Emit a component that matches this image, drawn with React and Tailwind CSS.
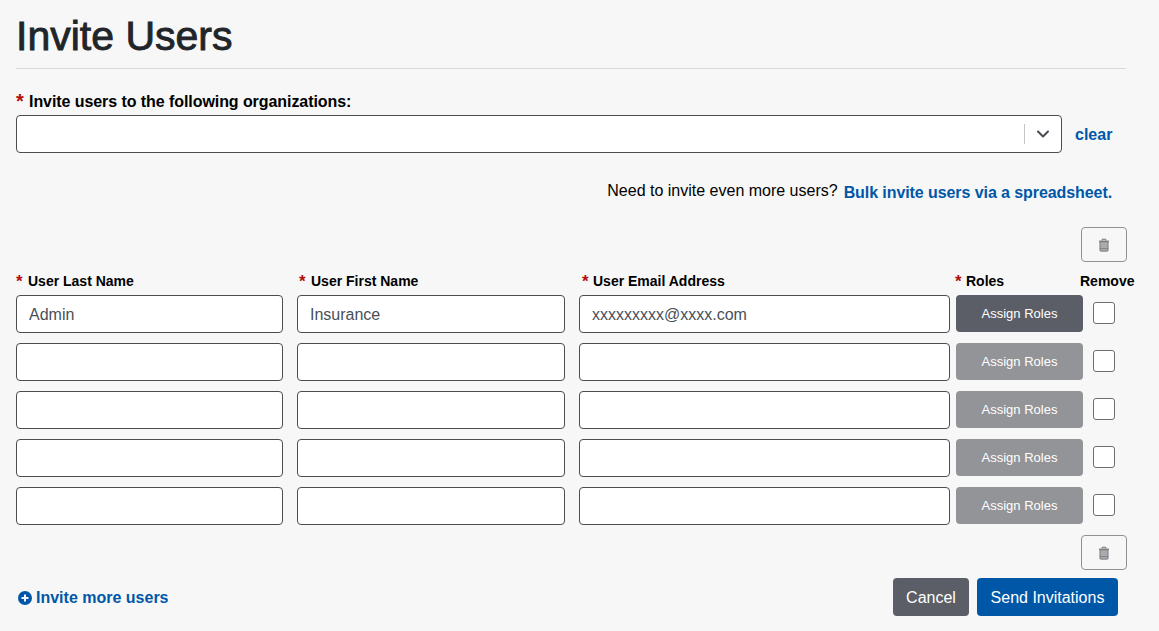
import React from "react";
import { ChevronDown } from "lucide-react";

function Star({ big = false, narrow = false }) {
  return (
    <span className={`inline-block text-[#b00d0d] font-bold leading-none [vertical-align:-1px] ${big ? "w-[13px] text-[20px] h-[12px]" : narrow ? "w-[11px] text-[17px] h-[10px]" : "w-[12px] text-[17px] h-[10px]"}`}>*</span>
  );
}

function Trash() {
  return (
    <svg width="12" height="14" viewBox="0 0 12 14" aria-hidden="true">
      <path d="M1 2.6h10v1.2H1z" fill="#6f7175" />
      <path d="M4.2 2.6V1.2h3.6v1.4" fill="none" stroke="#6f7175" strokeWidth="1" />
      <path d="M1.9 3.8h8.2v8.4c0 .6-.4 1-1 1H2.9c-.6 0-1-.4-1-1z" fill="#a9abad" stroke="#6f7175" strokeWidth=".8" />
      <path d="M2 10.6h8" stroke="#6f7175" strokeWidth=".7" />
    </svg>
  );
}

function TrashButton() {
  return (
    <div className="flex justify-end pr-[32px]">
      <button className="w-[46px] h-[35px] border border-[#8f9194] rounded flex items-center justify-center bg-[#f7f7f7]">
        <Trash />
      </button>
    </div>
  );
}

function Field({ value, w }) {
  return (
    <input
      readOnly
      value={value}
      className={`${w} h-[38px] bg-white border border-[#4a4d52] rounded pl-3 pt-[2px] text-base text-[#495057] outline-none`}
    />
  );
}

function Row({ last = "", first = "", email = "", active = false }) {
  return (
    <div className="flex items-center h-[38px]">
      <Field value={last} w="w-[267px]" />
      <div className="w-[14px]" />
      <Field value={first} w="w-[268px]" />
      <div className="w-[14px]" />
      <Field value={email} w="w-[371px]" />
      <button
        className={`ml-[6px] w-[127px] h-[37px] self-start rounded text-[13px] text-white ${
          active ? "bg-[#5b5e66]" : "bg-[#939497]"
        }`}
      >
        Assign Roles
      </button>
      <div className="ml-[10px] mb-[2px] w-[22px] h-[22px] bg-white border border-[#6b6d70] rounded-[3px]" />
    </div>
  );
}

export default function App() {
  return (
    <div className="w-[1159px] h-[631px] overflow-hidden bg-[#f7f7f7] pl-4 font-['Liberation_Sans',Arial,sans-serif] text-black">
      <h1 className="w-[1110px] h-[69px] border-b border-[#d5dbdb] text-[41px] leading-[73px] [-webkit-text-stroke:0.9px_#212529] text-[#212529]">
        Invite Users
      </h1>

      <div className="mt-[22px] h-[22px] text-base leading-[22px] font-bold tracking-[-0.07px]">
        <Star big />
        Invite users to the following organizations:
      </div>
      <div className="flex items-center mt-[2px]">
        <div className="w-[1046px] h-[38px] bg-white border border-[#4a4d52] rounded flex items-center justify-end">
          <div className="w-px h-[20px] bg-[#c4c4c4]" />
          <ChevronDown size={20} strokeWidth={2.5} className="text-[#4a4d52] ml-[8px] mr-[8px]" />
        </div>
        <a className="ml-[13px] pt-[2px] text-base font-bold text-[#0057a8]">clear</a>
      </div>

      <div className="w-[1096px] mt-[27px] h-[22px] flex justify-end items-start text-base leading-[22px]">
        <span>Need to invite even more users?</span>
        <a className="ml-[6px] mt-[2px] font-bold tracking-[-0.08px] text-[#0057a8]">Bulk invite users via a spreadsheet.</a>
      </div>

      <div className="mt-[25px]">
        <TrashButton />
      </div>

      <div className="flex items-center mt-[7px] h-[24px] text-sm font-bold">
        <div className="w-[283px]"><Star />User Last Name</div>
        <div className="w-[283px]"><Star />User First Name</div>
        <div className="w-[373px]"><Star narrow />User Email Address</div>
        <div className="w-[125px]"><Star narrow />Roles</div>
        <div>Remove</div>
      </div>

      <div className="flex flex-col gap-[10px] mt-[2px]">
        <Row last="Admin" first="Insurance" email="xxxxxxxxx@xxxx.com" active />
        <Row />
        <Row />
        <Row />
        <Row />
      </div>

      <div className="mt-[10px]">
        <TrashButton />
      </div>

      <div className="flex items-center justify-between w-[1102px] mt-[8px]">
        <a className="flex items-center gap-[4px] pl-[2px] pt-[2px] text-base font-bold text-[#0057a8]">
          <svg width="14" height="14" viewBox="0 0 14 14" aria-hidden="true">
            <circle cx="7" cy="7" r="7" fill="#0057a8" />
            <path d="M7 3.5v7M3.5 7h7" stroke="#f7f7f7" strokeWidth="2" />
          </svg>
          Invite more users
        </a>
        <div className="flex gap-2">
          <button className="w-[76px] h-[38px] pt-[2px] rounded bg-[#5b5e66] text-white text-base">Cancel</button>
          <button className="w-[141px] h-[38px] pt-[2px] rounded bg-[#0057a8] text-white text-base">Send Invitations</button>
        </div>
      </div>
    </div>
  );
}
